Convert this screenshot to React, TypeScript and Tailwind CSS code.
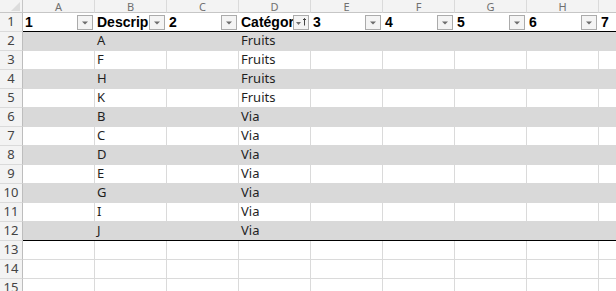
import type { ReactNode } from 'react';

const COLS = ['A', 'B', 'C', 'D', 'E', 'F', 'G', 'H', 'I'];
const HEADERS = ['1', 'Descrip', '2', 'Catégor', '3', '4', '5', '6', '7'];

const ROWS: [string, string][] = [
  ['A', 'Fruits'],
  ['F', 'Fruits'],
  ['H', 'Fruits'],
  ['K', 'Fruits'],
  ['B', 'Via'],
  ['C', 'Via'],
  ['D', 'Via'],
  ['E', 'Via'],
  ['G', 'Via'],
  ['I', 'Via'],
  ['J', 'Via'],
];

function FilterButton({ sorted }: { sorted?: boolean }) {
  return (
    <div className="mr-[2px] flex h-[15px] w-[16px] shrink-0 items-center justify-center border border-[#ababab] bg-[#f4f4f4]">
      <svg width="14" height="13" viewBox="0 0 14 13">
        {sorted ? (
          <>
            <path d="M2 6h5l-2.5 3z" fill="#6d6d6d" />
            <path d="M10.5 2.5v7M9 4l1.5-1.5L12 4" stroke="#444" strokeWidth="1" fill="none" />
          </>
        ) : (
          <path d="M4 5.5h6l-3 3z" fill="#6d6d6d" />
        )}
      </svg>
    </div>
  );
}

function RowHead({ children }: { children: ReactNode }) {
  return (
    <div className="flex w-[23px] shrink-0 items-center justify-center border-r border-b border-r-[#bdbdbd] border-b-[#dadada] bg-[#f3f3f3] text-[13px] text-[#444]">
      {children}
    </div>
  );
}

export default function App() {
  return (
    <div
      className="h-[291px] w-[616px] overflow-hidden bg-white"
      style={{ fontFamily: '"Noto Sans", "Liberation Sans", sans-serif' }}
    >
      {/* column letters */}
      <div className="flex h-[13px]">
        <div className="relative w-[23px] shrink-0 border-r border-b border-[#c6c6c6] bg-[#f3f3f3]">
          <svg className="absolute right-[2px] bottom-[1px]" width="9" height="9" viewBox="0 0 9 9">
            <path d="M9 0v9H0z" fill="#dcdcdc" />
          </svg>
        </div>
        {COLS.map((c) => (
          <div
            key={c}
            className="flex w-[72px] shrink-0 items-center justify-center border-r border-b border-r-[#dadada] border-b-[#c6c6c6] bg-[#f3f3f3] text-[11px] leading-[11px] text-[#6f6f6f]"
          >
            {c}
          </div>
        ))}
      </div>

      {/* table header row */}
      <div className="flex h-[19px]">
        <RowHead>1</RowHead>
        <div className="flex border-b border-black bg-white">
          {HEADERS.map((h, i) => (
            <div
              key={h}
              className="flex w-[72px] shrink-0 items-center overflow-hidden"
              style={{ fontFamily: '"Liberation Sans", Arial, sans-serif' }}
            >
              <span className="flex-1 overflow-hidden whitespace-nowrap pl-[2px] text-[14px] font-bold text-black">
                {h}
              </span>
              {i < 8 && <FilterButton sorted={i === 3} />}
            </div>
          ))}
        </div>
      </div>

      {/* data rows */}
      {ROWS.map(([desc, cat], idx) => {
        const banded = idx % 2 === 0;
        const last = idx === ROWS.length - 1;
        return (
          <div key={idx} className="flex h-[19px]">
            <RowHead>{idx + 2}</RowHead>
            <div
              className={`flex border-b ${last ? 'border-black' : 'border-[#d9d9d9]'} ${banded ? 'bg-[#d9d9d9]' : 'bg-white'}`}
            >
              {COLS.map((c, ci) => (
                <div
                  key={c}
                  className={`flex w-[72px] shrink-0 items-center overflow-hidden whitespace-nowrap pl-[2px] text-[13px] text-[#1f1f1f] ${banded ? '' : 'border-r border-[#dadada]'}`}
                >
                  {ci === 1 ? desc : ci === 3 ? cat : ''}
                </div>
              ))}
            </div>
          </div>
        );
      })}

      {/* empty rows */}
      {[13, 14, 15].map((n) => (
        <div key={n} className="flex h-[19px]">
          <RowHead>{n}</RowHead>
          {COLS.map((c) => (
            <div key={c} className="w-[72px] shrink-0 border-r border-b border-[#dadada]" />
          ))}
        </div>
      ))}
    </div>
  );
}
